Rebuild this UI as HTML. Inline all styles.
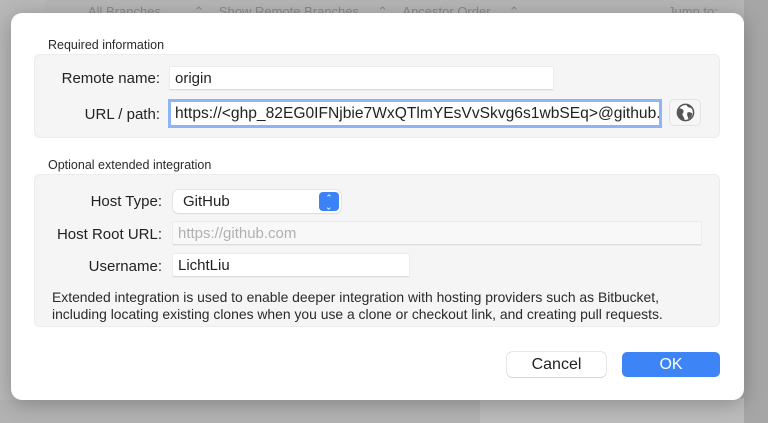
<!DOCTYPE html>
<html><head><style>
*{box-sizing:border-box;margin:0;padding:0}
body{width:768px;height:423px;overflow:hidden;background:#ababab;font-family:"Liberation Sans",sans-serif;position:relative;color:#222}
.a{position:absolute}
.bgt{color:#8a8a8a;font-size:13px}
.dlg{left:11px;top:13px;width:733px;height:387px;background:#fff;border-radius:11px;box-shadow:0 4px 20px rgba(0,0,0,.25)}
.box{background:#f5f5f5;border-radius:6px;border:1px solid #ececec}
.hd{font-size:12.5px;color:#2a2a2a}
.lbl{font-size:15px;color:#222;text-align:right}
.fld{background:#fff;border-bottom:1px solid #ddd;box-shadow:0 0 0 .5px #e2e2e2;font-size:15px;padding:3px 0 0 5px;white-space:nowrap;overflow:hidden}
</style></head><body>
<div class="a" style="left:0;top:0;width:768px;height:30px;background:#b5b5b5"></div>
<div class="a bgt" style="left:88px;top:4px">All Branches &nbsp; &nbsp; &nbsp; &nbsp; ⌃ &nbsp; &nbsp;Show Remote Branches &nbsp; &nbsp; ⌃ &nbsp; &nbsp;Ancestor Order &nbsp; &nbsp; ⌃</div>
<div class="a bgt" style="left:668px;top:4px">Jump to:</div>
<div class="a" style="left:0;top:0;width:45px;height:423px;background:#b8b8b8"></div>
<div class="a" style="left:0;top:400px;width:768px;height:23px;background:#b2b2b2"></div>
<div class="a" style="left:480px;top:398px;width:288px;height:25px;background:#bcbcbc"></div>
<div class="a" style="left:744px;top:0;width:24px;height:423px;background:#a6a6a6"></div>

<div class="a dlg"></div>
<div class="a hd" style="left:48px;top:38px">Required information</div>
<div class="a box" style="left:34px;top:54px;width:686px;height:84px"></div>
<div class="a lbl" style="left:40px;top:70px;width:120px">Remote name:</div>
<div class="a fld" style="left:170px;top:67px;width:383px;height:23px">origin</div>
<div class="a lbl" style="left:40px;top:106px;width:120px">URL / path:</div>
<div class="a fld" style="left:168px;top:99px;width:494px;height:29px;border:3px solid #8fb4f3;box-shadow:none;padding:3px 0 0 4px;font-size:15.6px">https://&lt;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&gt;@github.com</div>
<div class="a" style="left:669px;top:99px;width:32px;height:27px;border:1px solid #e3e3e3;border-radius:5px;background:#f6f6f6"></div>
<svg class="a" style="left:676px;top:103px" width="19" height="19" viewBox="0 0 20 20"><circle cx="10" cy="10" r="8.5" fill="#fff" stroke="#555" stroke-width="1.6"/><path d="M3 6c3-1 5 1 5 3s-2 2-1 4 2 3 2 5c-4-1-7-4-7-8zM12 10c2-1 4 0 5 1 0 3-2 5-4 6 0-2-2-4-1-7zM11 2c1 2 2 3 4 3l2 1c-1-2-3-4-6-4z" fill="#555"/></svg>

<div class="a hd" style="left:48px;top:158px">Optional extended integration</div>
<div class="a box" style="left:34px;top:174px;width:686px;height:153px"></div>
<div class="a lbl" style="left:40px;top:193px;width:122px">Host Type:</div>
<div class="a" style="left:173px;top:190px;width:168px;height:23px;background:#fff;border-radius:5px;box-shadow:0 0 0 .5px #d6d6d6,0 1px 1px rgba(0,0,0,.1);font-size:15px;padding:3px 0 0 10px">GitHub</div>
<div class="a" style="left:319px;top:192px;width:20px;height:19px;background:#3b82f6;border-radius:4px;color:#fff;font-size:9px;line-height:8px;text-align:center;padding-top:2px">⌃<br><span style="display:inline-block;transform:rotate(180deg)">⌃</span></div>
<div class="a lbl" style="left:40px;top:226px;width:122px">Host Root URL:</div>
<div class="a fld" style="left:173px;top:222px;width:528px;height:23px;background:#f8f8f8;color:#b0b0b0">https://github.com</div>
<div class="a lbl" style="left:40px;top:258px;width:122px">Username:</div>
<div class="a fld" style="left:173px;top:254px;width:236px;height:23px">LichtLiu</div>
<div class="a" style="left:52px;top:289px;font-size:13.9px;line-height:16.5px;color:#2a2a2a;white-space:nowrap">Extended integration is used to enable deeper integration with hosting providers such as Bitbucket,<br>including locating existing clones when you use a clone or checkout link, and creating pull requests.</div>

<div class="a" style="left:507px;top:352px;width:99px;height:25px;background:#fff;border-radius:5px;box-shadow:0 0 0 .5px #d0d0d0,0 1px 1px rgba(0,0,0,.15);font-size:16px;text-align:center;line-height:25px">Cancel</div>
<div class="a" style="left:622px;top:352px;width:98px;height:25px;background:#3d85f6;border-radius:5px;color:#fff;font-size:16px;text-align:center;line-height:25px">OK</div>
</body></html>
